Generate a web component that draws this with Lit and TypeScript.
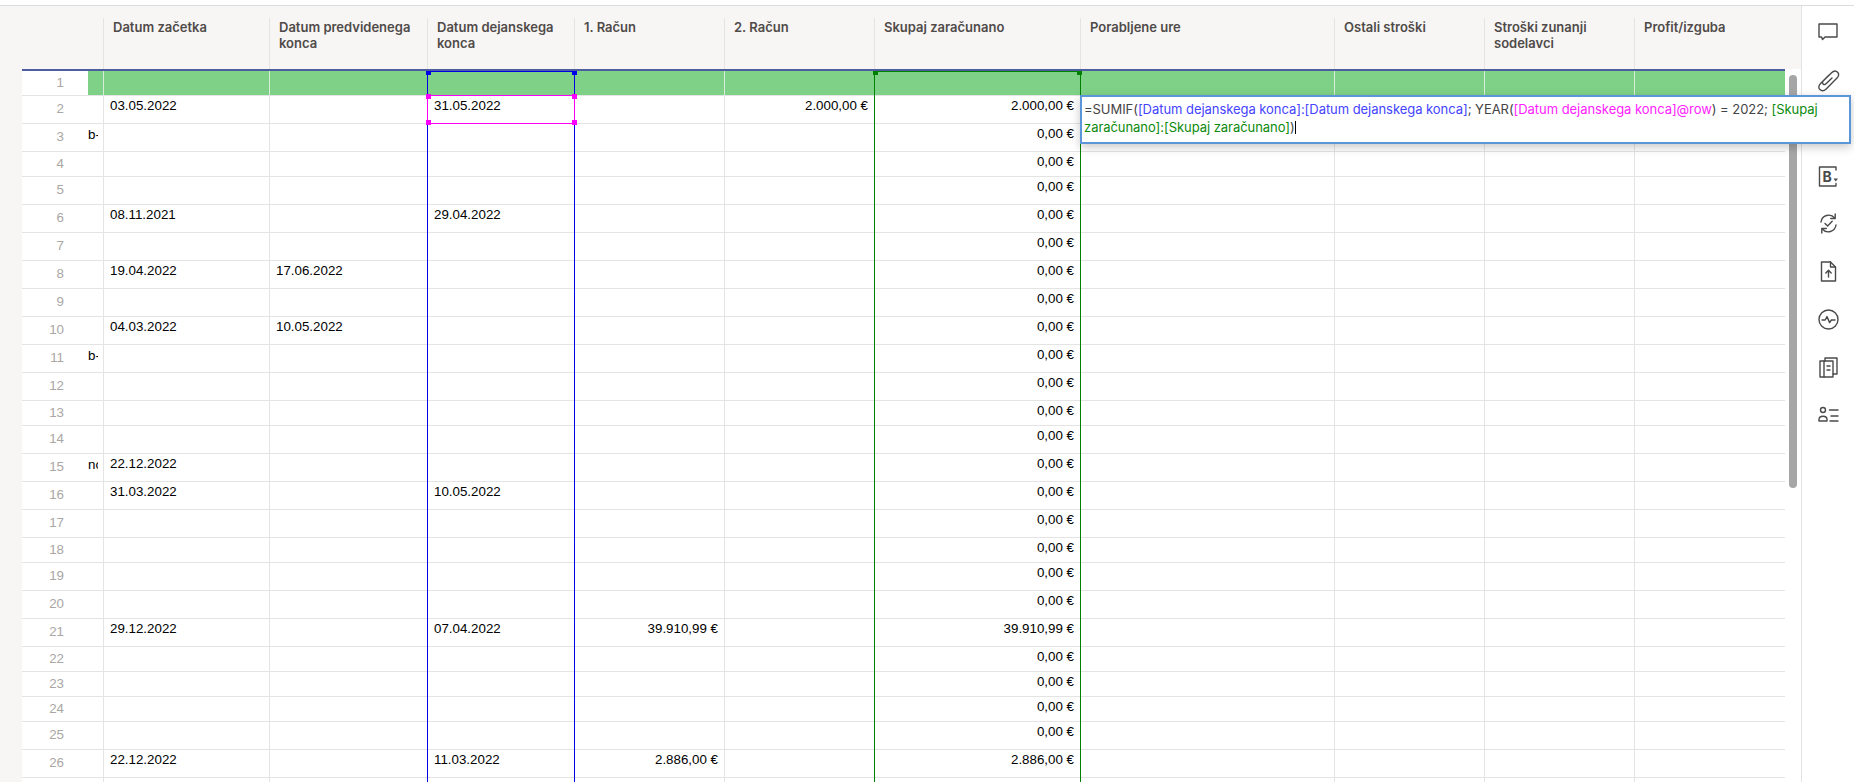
import { LitElement, html, css, svg } from "lit";
import { customElement } from "lit/decorators.js";

const COLS = [166, 158, 147, 150, 150, 206, 254, 150, 150, 150];
const HEADS = [
  "Datum začetka",
  "Datum predvidenega konca",
  "Datum dejanskega konca",
  "1. Račun",
  "2. Račun",
  "Skupaj zaračunano",
  "Porabljene ure",
  "Ostali stroški",
  "Stroški zunanji sodelavci",
  "Profit/izguba",
];

interface Row {
  h: number;
  tag?: string;
  start?: string;
  plan?: string;
  end?: string;
  r1?: string;
  r2?: string;
  total?: string;
  noNum?: boolean;
}

const Z = "0,00 €";
const ROWS: Row[] = [
  { h: 28, start: "03.05.2022", end: "31.05.2022", r2: "2.000,00 €", total: "2.000,00 €" },
  { h: 28, tag: "b-", total: Z },
  { h: 25, total: Z },
  { h: 28, total: Z },
  { h: 28, start: "08.11.2021", end: "29.04.2022", total: Z },
  { h: 28, total: Z },
  { h: 28, start: "19.04.2022", plan: "17.06.2022", total: Z },
  { h: 28, total: Z },
  { h: 28, start: "04.03.2022", plan: "10.05.2022", total: Z },
  { h: 28, tag: "b-", total: Z },
  { h: 28, total: Z },
  { h: 25, total: Z },
  { h: 28, total: Z },
  { h: 28, tag: "nc", start: "22.12.2022", total: Z },
  { h: 28, start: "31.03.2022", end: "10.05.2022", total: Z },
  { h: 28, total: Z },
  { h: 25, total: Z },
  { h: 28, total: Z },
  { h: 28, total: Z },
  { h: 28, start: "29.12.2022", end: "07.04.2022", r1: "39.910,99 €", total: "39.910,99 €" },
  { h: 25, total: Z },
  { h: 25, total: Z },
  { h: 25, total: Z },
  { h: 28, total: Z },
  { h: 28, start: "22.12.2022", end: "11.03.2022", r1: "2.886,00 €", total: "2.886,00 €" },
  { h: 28, noNum: true },
];

const ICONS = [
  svg`<path d="M2 3h18v13H8l-2.500 2.600L4.600 16H2z"/>`,
  svg`<path d="M11.500 6.500L3.800 14.200c-2.400 2.400-2.500 4.900-.9 6.400s4.200 1.400 6.300-.7L20 9.100c2-2 2.100-4.400.6-5.900s-4-1.500-6 .5L6.400 11.800c-1.100 1.100-1.100 2.400-.3 3.200s2.100.7 3.200-.4l5.700-5.700"/>`,
  svg`<path d="M4 5h14M4 11h14M4 17h14"/>`,
  svg`<path d="M19 2H2.500v19H19M19 2v3M19 20.500v-2"/><text x="5.400" y="16.500" class="b">B</text><path class="fill" d="M16.500 13.500h4.500l-2.250 3z"/>`,
  svg`<path d="M4 10A7.800 7.800 0 0 1 17.700 6M19 13a7.800 7.800 0 0 1-13.700 4"/><path d="M18.200 2v4.500h-4.500M4.800 21v-4.500h4.500"/><path d="M8 11.400l2.600 2.600 4.600-4.800"/>`,
  svg`<path d="M13.500 2H4.500v19h14V7z"/><path d="M13.500 2v5h5"/><path d="M11.500 17v-6.500M8.800 13l2.700-2.700 2.700 2.700"/>`,
  svg`<circle cx="11.500" cy="11.500" r="9.500"/><path d="M5 12h3.200l1.800-3.400 2.600 6 1.800-2.600H18"/>`,
  svg`<path d="M8 5V2h12v16h-4"/><path d="M3 5h13v16H3z"/><path d="M7 5v16M10 10h3M10 14h3"/>`,
  svg`<circle cx="6" cy="7" r="2.500"/><path d="M2 18v-1.500c0-2 1.800-3.200 4-3.200s4 1.200 4 3.200V18z"/><path d="M12.500 7h8.500M14 13h7M13 18h8"/>`,
];

@customElement("app-root")
export class AppRoot extends LitElement {
  static styles = css`
    :host {
      display: block;
      width: 1854px;
      height: 782px;
      overflow: hidden;
      position: relative;
      background: #fff;
      font-family: "Liberation Sans", Arial, sans-serif;
    }
    .strip {
      height: 5px;
      background: #fff;
      border-bottom: 1px solid #dcdcdc;
    }
    .layout {
      display: flex;
      height: 776px;
    }
    .main {
      width: 1801px;
      flex: none;
      position: relative;
      overflow: hidden;
    }
    .panel {
      flex: 1;
      border-left: 1px solid #e3e3e3;
      padding-top: 3px;
      display: flex;
      flex-direction: column;
      align-items: center;
    }
    .icon {
      height: 47.75px;
      display: flex;
      align-items: center;
      justify-content: center;
      flex: none;
    }
    .icon svg {
      width: 23px;
      height: 23px;
      fill: none;
      stroke: #4a4a4a;
      stroke-width: 1.4;
      stroke-linejoin: round;
      stroke-linecap: round;
    }
    .icon svg .b {
      font: 700 14px "Inter", sans-serif;
      fill: #4a4a4a;
      stroke: none;
    }
    .icon svg .fill {
      fill: #4a4a4a;
      stroke: none;
    }
    .head {
      background: #f7f6f5;
      height: 63px;
      padding-left: 22px;
      display: flex;
    }
    .hfirst {
      width: 81px;
      flex: none;
      margin-top: 12px;
      border-right: 1px solid #e6e4e2;
      box-sizing: content-box;
    }
    .hcell {
      flex: none;
      box-sizing: border-box;
      margin-top: 12px;
      padding: 1px 8px 0 9px;
      border-right: 1px solid #e6e4e2;
      font: 600 13px/16px "Inter", sans-serif;
      color: #504b49;
    }
    .hcell:last-child {
      border-right: none;
    }
    .bodywrap {
      background: linear-gradient(to right, #f7f6f5 22px, #fff 22px);
      height: 713px;
    }
    .table {
      margin-left: 22px;
      width: 1763px;
      border-top: 2px solid #4d5e9e;
    }
    .row {
      display: flex;
      box-sizing: border-box;
      border-bottom: 1px solid #e4e4e4;
      font-size: 13.33px;
      color: #000;
    }
    .num {
      width: 42px;
      flex: none;
      height: 15px;
      align-self: center;
      position: relative;
      top: -1px;
      text-align: right;
      color: #aaa6a3;
      font-size: 13.33px;
      line-height: 15px;
    }
    .numpad {
      width: 24px;
      flex: none;
    }
    .tag {
      width: 16px;
      flex: none;
      box-sizing: border-box;
      border-right: 1px solid #e4e4e4;
      padding-top: 3px;
      line-height: 15px;
    }
    .clip {
      display: block;
      width: 10px;
      overflow: hidden;
      white-space: nowrap;
    }
    .cell {
      flex: none;
      box-sizing: border-box;
      border-right: 1px solid #e4e4e4;
      padding: 2px 6px 0;
      line-height: 15px;
      white-space: nowrap;
      overflow: hidden;
    }
    .cell:last-child {
      border-right: none;
    }
    .right {
      text-align: right;
    }
    .greenpart .tag,
    .greenpart .cell {
      border-right-color: #d6eeda;
    }
    .greenpart {
      display: flex;
      background: #7fd187;
    }
    .row.first {
      height: 25px;
    }
    .line {
      position: absolute;
      z-index: 2;
    }
    .h {
      position: absolute;
      z-index: 3;
      width: 5px;
    }
    .blue {
      background: #0000e6;
    }
    .mag {
      background: #ff00ff;
    }
    .grn {
      background: #008000;
    }
    .t-blue {
      left: 427px;
      top: 65px;
      width: 148px;
      height: 720px;
      box-sizing: border-box;
      border: 1px solid #0000e6;
    }
    .t-mag {
      left: 427px;
      top: 89px;
      width: 148px;
      height: 29px;
      box-sizing: border-box;
      border: 1px solid #ff00ff;
    }
    .t-grn {
      left: 874px;
      top: 65px;
      width: 207px;
      height: 720px;
      box-sizing: border-box;
      border: 1px solid #008000;
    }
    .scroll {
      position: absolute;
      left: 1789px;
      top: 69px;
      width: 8px;
      height: 413px;
      border-radius: 4px;
      background: #a6a6a6;
    }
    .editor {
      position: absolute;
      z-index: 5;
      left: 1080px;
      top: 95px;
      width: 771px;
      height: 49px;
      box-sizing: border-box;
      border: 2px solid #5b97d8;
      background: #fff;
      box-shadow: 0 3px 9px rgba(0, 0, 0, 0.22);
      padding: 3px 20px 0 2px;
      font: 400 13px/18px "Inter", sans-serif;
      letter-spacing: -0.05px;
      color: #444;
    }
    .c-b {
      color: #4444ff;
    }
    .c-m {
      color: #ff22ff;
    }
    .c-g {
      color: #0b8a0b;
    }
    .caret {
      display: inline-block;
      width: 1px;
      height: 13px;
      background: #000;
      vertical-align: -2px;
    }
  `;

  private handle(x: number, y: number, h: number, cls: string) {
    return html`<div class="h ${cls}" style="left:${x}px;top:${y}px;height:${h}px"></div>`;
  }

  render() {
    return html`
      <div class="strip"></div>
      <div class="layout">
        <div class="main">
          <div class="head">
            <div class="hfirst"></div>
            ${HEADS.map(
              (t, i) => html`<div class="hcell" style="width:${COLS[i]}px">${t}</div>`
            )}
          </div>
          <div class="bodywrap">
            <div class="table">
              <div class="row first">
                <div class="num">1</div>
                <div class="numpad"></div>
                <div class="greenpart">
                  <div class="tag"></div>
                  ${COLS.map((w) => html`<div class="cell" style="width:${w}px"></div>`)}
                </div>
              </div>
              ${ROWS.map((r, i) => this.renderRow(r, i + 2))}
            </div>
          </div>
          <div class="line t-blue"></div>
          <div class="line t-grn"></div>
          <div class="line t-mag"></div>
          ${this.handle(426, 65, 4, "blue")} ${this.handle(572, 65, 4, "blue")}
          ${this.handle(873, 65, 4, "grn")} ${this.handle(1077, 65, 4, "grn")}
          ${this.handle(426, 88, 5, "mag")} ${this.handle(572, 88, 5, "mag")}
          ${this.handle(426, 114, 5, "mag")} ${this.handle(572, 114, 5, "mag")}
          <div class="scroll"></div>
        </div>
        <div class="panel">
          ${ICONS.map(
            (p) => html`<div class="icon"><svg viewBox="0 0 23 23">${p}</svg></div>`
          )}
        </div>
      </div>
      <div class="editor">
        =SUMIF(<span class="c-b">[Datum dejanskega konca]:[Datum dejanskega konca]</span>;
        YEAR(<span class="c-m">[Datum dejanskega konca]@row</span>) = 2022;
        <span class="c-g">[Skupaj zaračunano]:[Skupaj zaračunano]</span>)<span class="caret"></span>
      </div>
    `;
  }

  private renderRow(r: Row, n: number) {
    const vals = [r.start, r.plan, r.end, r.r1, r.r2, r.total, "", "", "", ""];
    return html`<div class="row" style="height:${r.h}px">
      <div class="num">${r.noNum ? "" : n}</div>
      <div class="numpad"></div>
      <div class="tag"><span class="clip">${r.tag ?? ""}</span></div>
      ${COLS.map(
        (w, i) =>
          html`<div class="cell ${i >= 3 && i <= 5 ? "right" : ""}" style="width:${w}px">${vals[i] ?? ""}</div>`
      )}
    </div>`;
  }
}
